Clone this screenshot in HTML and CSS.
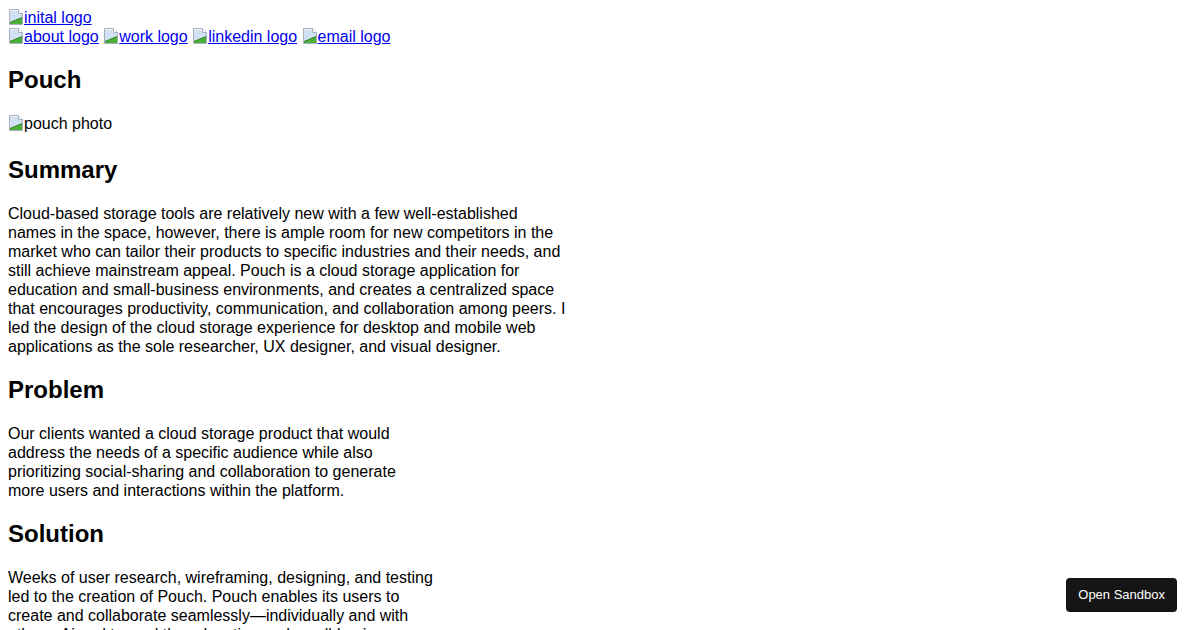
FILE: index.html
```html
<!DOCTYPE html>
<html lang="en">
<head>
    <meta charset="UTF-8">
    <meta name="viewport" content="width=device-width, initial-scale=1.0">
    <title>Pouch</title>
    <link rel="stylesheet" href="styles.css">
</head>
<body>

    <!-- 상단 네비게이션 (이미지 깨짐 상태) -->
    <header class="nav">
        <div><a href="#" class="alt-link"><svg class="broken" viewBox="0 0 16 16"><path d="M1.5 0.5h9l4 4v11h-13z" fill="#f2f4f7" stroke="#a8b0ba"/><path d="M10.5 0.5v4h4" fill="#fff" stroke="#a8b0ba"/><path d="M2 2h8v3h4v3L2 13z" fill="#cfe1f3"/><path d="M2 15h12V8.5L2 13.5z" fill="#4caf3a"/><path d="M2 13.5L14 8.5" stroke="#2e7d22"/></svg>inital logo</a></div>
        <div>
            <a href="#" class="alt-link"><svg class="broken" viewBox="0 0 16 16"><path d="M1.5 0.5h9l4 4v11h-13z" fill="#f2f4f7" stroke="#a8b0ba"/><path d="M10.5 0.5v4h4" fill="#fff" stroke="#a8b0ba"/><path d="M2 2h8v3h4v3L2 13z" fill="#cfe1f3"/><path d="M2 15h12V8.5L2 13.5z" fill="#4caf3a"/><path d="M2 13.5L14 8.5" stroke="#2e7d22"/></svg>about logo</a>
            <a href="#" class="alt-link"><svg class="broken" viewBox="0 0 16 16"><path d="M1.5 0.5h9l4 4v11h-13z" fill="#f2f4f7" stroke="#a8b0ba"/><path d="M10.5 0.5v4h4" fill="#fff" stroke="#a8b0ba"/><path d="M2 2h8v3h4v3L2 13z" fill="#cfe1f3"/><path d="M2 15h12V8.5L2 13.5z" fill="#4caf3a"/><path d="M2 13.5L14 8.5" stroke="#2e7d22"/></svg>work logo</a>
            <a href="#" class="alt-link"><svg class="broken" viewBox="0 0 16 16"><path d="M1.5 0.5h9l4 4v11h-13z" fill="#f2f4f7" stroke="#a8b0ba"/><path d="M10.5 0.5v4h4" fill="#fff" stroke="#a8b0ba"/><path d="M2 2h8v3h4v3L2 13z" fill="#cfe1f3"/><path d="M2 15h12V8.5L2 13.5z" fill="#4caf3a"/><path d="M2 13.5L14 8.5" stroke="#2e7d22"/></svg>linkedin logo</a>
            <a href="#" class="alt-link"><svg class="broken" viewBox="0 0 16 16"><path d="M1.5 0.5h9l4 4v11h-13z" fill="#f2f4f7" stroke="#a8b0ba"/><path d="M10.5 0.5v4h4" fill="#fff" stroke="#a8b0ba"/><path d="M2 2h8v3h4v3L2 13z" fill="#cfe1f3"/><path d="M2 15h12V8.5L2 13.5z" fill="#4caf3a"/><path d="M2 13.5L14 8.5" stroke="#2e7d22"/></svg>email logo</a>
        </div>
    </header>

    <h1 class="title">Pouch</h1>

    <p class="photo"><svg class="broken" viewBox="0 0 16 16"><path d="M1.5 0.5h9l4 4v11h-13z" fill="#f2f4f7" stroke="#a8b0ba"/><path d="M10.5 0.5v4h4" fill="#fff" stroke="#a8b0ba"/><path d="M2 2h8v3h4v3L2 13z" fill="#cfe1f3"/><path d="M2 15h12V8.5L2 13.5z" fill="#4caf3a"/><path d="M2 13.5L14 8.5" stroke="#2e7d22"/></svg>pouch photo</p>

    <h2>Summary</h2>
    <p class="summary">Cloud-based storage tools are relatively new with a few well-established names in the space, however, there is ample room for new competitors in the market who can tailor their products to specific industries and their needs, and still achieve mainstream appeal. Pouch is a cloud storage application for education and small-business environments, and creates a centralized space that encourages productivity, communication, and collaboration among peers. I led the design of the cloud storage experience for desktop and mobile web applications as the sole researcher, UX designer, and visual designer.</p>

    <h2>Problem</h2>
    <p class="problem">Our clients wanted a cloud storage product that would address the needs of a specific audience while also prioritizing social-sharing and collaboration to generate more users and interactions within the platform.</p>

    <h2>Solution</h2>
    <p class="solution">Weeks of user research, wireframing, designing, and testing led to the creation of Pouch. Pouch enables its users to create and collaborate seamlessly—individually and with others. Aimed toward the education and small-business environments, Pouch gives teams a shared home for their files.</p>

    <!-- 샌드박스 버튼 -->
    <a href="#" class="sandbox-button">Open Sandbox</a>

</body>
</html>
```

FILE: styles.css
```css
/* 기본 스타일 설정 */
body {
    font-family: 'Liberation Sans', Arial, sans-serif;
    font-size: 16px;
    line-height: 19px;
    color: #000;
    background-color: #fff;
    margin: 8px;
}

.alt-link {
    color: #0000ee;
    text-decoration: underline;
}

.broken {
    width: 16px;
    height: 16px;
    vertical-align: -2px;
}

.title,
h2 {
    font-size: 24px;
    line-height: 28px;
    font-weight: bold;
    margin: 20px 0;
}

p {
    margin: 16px 0;
}

.photo {
    margin: 0;
    padding-bottom: 3px;
}

.summary {
    width: 560px;
}

.problem {
    width: 395px;
}

.solution {
    width: 430px;
}

.sandbox-button {
    position: fixed;
    right: 23px;
    bottom: 18px;
    padding: 0 12px;
    height: 34px;
    line-height: 34px;
    background-color: #151515;
    color: #fff;
    font-size: 13px;
    border-radius: 4px;
    text-decoration: none;
}
```
